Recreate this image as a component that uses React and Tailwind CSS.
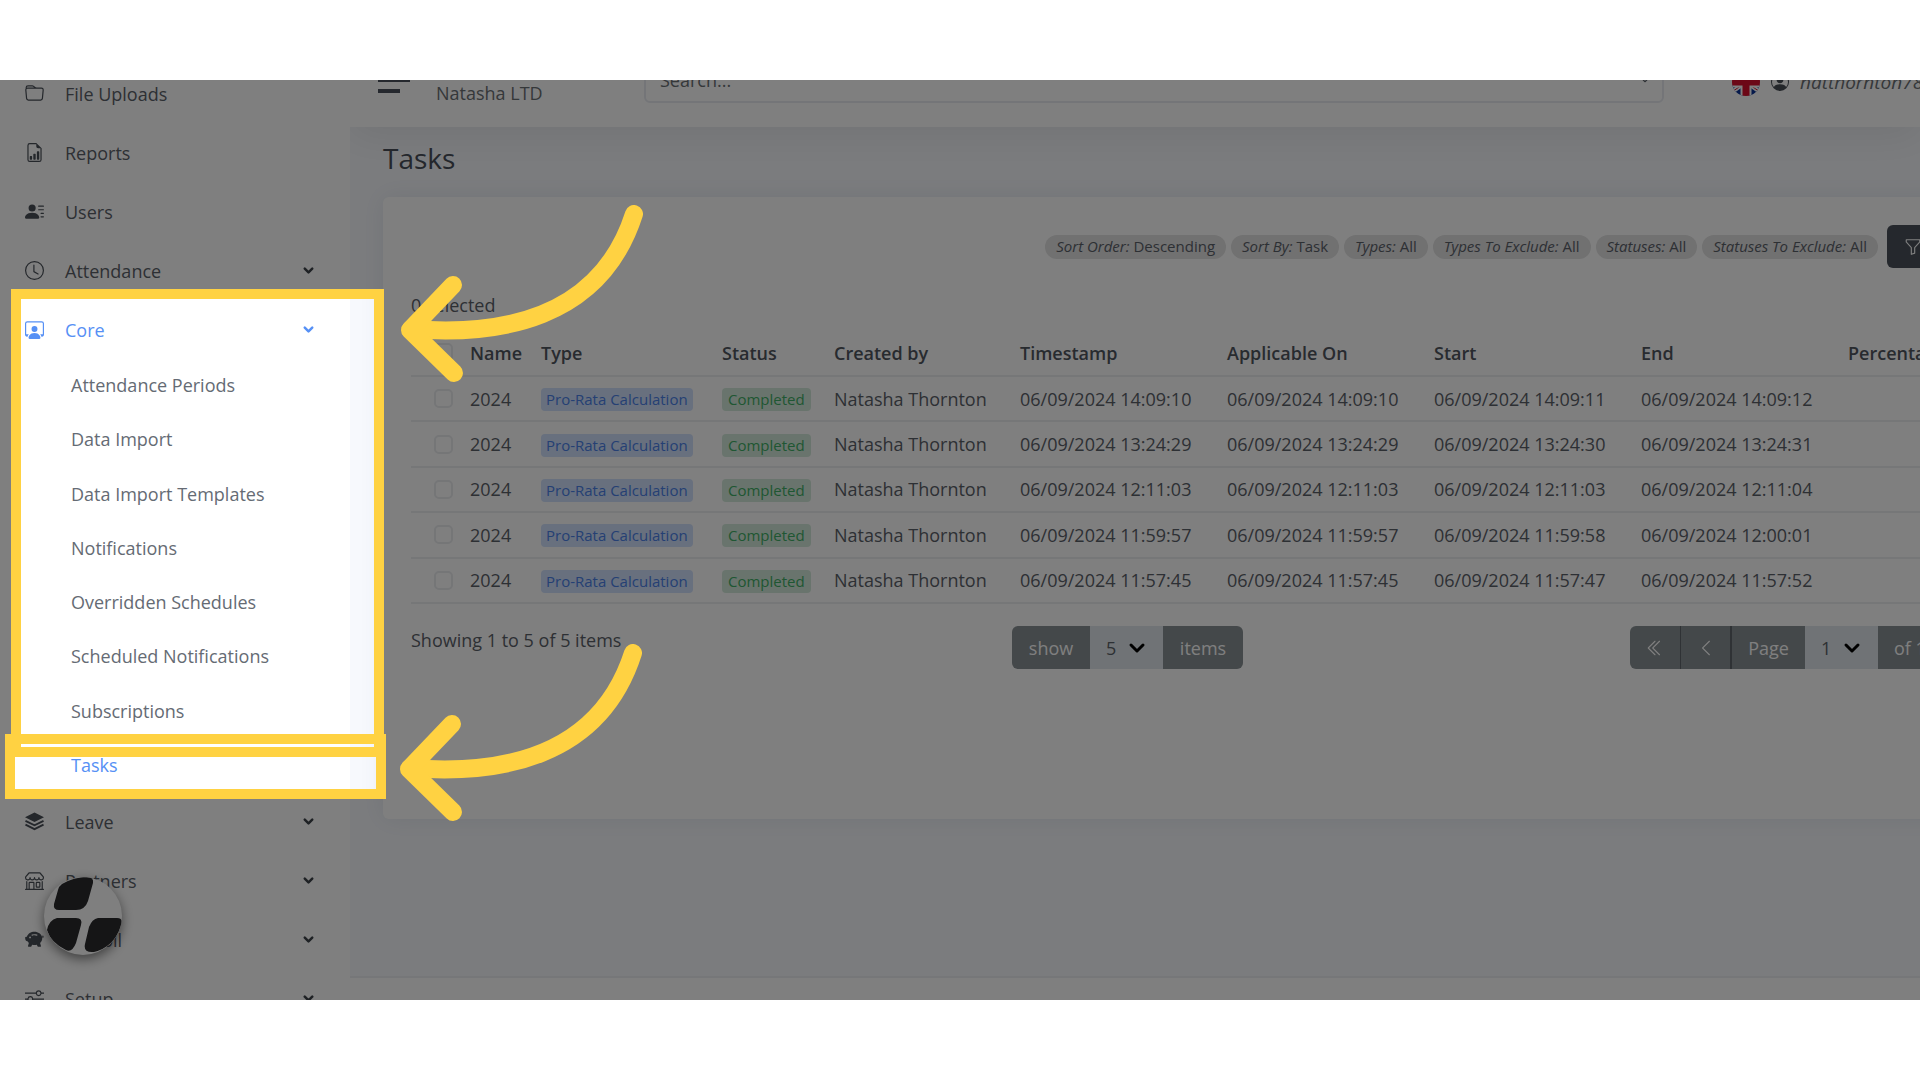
import React from 'react';
import { BsFolder, BsFileEarmarkBarGraph, BsPersonLinesFill, BsClock, BsPersonWorkspace, BsShop, BsPiggyBankFill, BsSliders, BsFunnel, BsPersonCircle, BsChevronLeft, BsChevronDoubleLeft } from 'react-icons/bs';
import { FiChevronDown } from 'react-icons/fi';

const LayersIcon = ({ size, className }) => (
  <svg viewBox="0 0 20 20" width={size} height={size} className={className} fill="none" stroke="currentColor" strokeWidth="2">
    <path d="M10 0.5L20 5.5L10 10.5L0 5.5Z" fill="currentColor" stroke="none" />
    <path d="M0.5 9.3L10 14L19.5 9.3M0.5 13.3L10 18L19.5 13.3" />
  </svg>
);

const topItems = [
  { label: 'File Uploads', icon: BsFolder },
  { label: 'Reports', icon: BsFileEarmarkBarGraph },
  { label: 'Users', icon: BsPersonLinesFill },
  { label: 'Attendance', icon: BsClock, expandable: true },
  { label: 'Core', icon: BsPersonWorkspace, expandable: true, active: true },
];

const coreItems = [
  'Attendance Periods',
  'Data Import',
  'Data Import Templates',
  'Notifications',
  'Overridden Schedules',
  'Scheduled Notifications',
  'Subscriptions',
  'Tasks',
];

const bottomItems = [
  { label: 'Leave', icon: LayersIcon, expandable: true },
  { label: 'Partners', icon: BsShop, expandable: true },
  { label: 'Payroll', icon: BsPiggyBankFill, expandable: true },
  { label: 'Setup', icon: BsSliders, expandable: true },
];

const filters = [
  ['Sort Order:', 'Descending'],
  ['Sort By:', 'Task'],
  ['Types:', 'All'],
  ['Types To Exclude:', 'All'],
  ['Statuses:', 'All'],
  ['Statuses To Exclude:', 'All'],
];

const columns = [
  { title: 'Name', width: 'w-[71px]' },
  { title: 'Type', width: 'w-[181px]' },
  { title: 'Status', width: 'w-[112px]' },
  { title: 'Created by', width: 'w-[186px]' },
  { title: 'Timestamp', width: 'w-[207px]' },
  { title: 'Applicable On', width: 'w-[207px]' },
  { title: 'Start', width: 'w-[207px]' },
  { title: 'End', width: 'w-[207px]' },
  { title: 'Percentage', width: 'w-[120px]' },
];

const tasks = [
  ['14:09:10', '14:09:10', '14:09:11', '14:09:12'],
  ['13:24:29', '13:24:29', '13:24:30', '13:24:31'],
  ['12:11:03', '12:11:03', '12:11:03', '12:11:04'],
  ['11:59:57', '11:59:57', '11:59:58', '12:00:01'],
  ['11:57:45', '11:57:45', '11:57:47', '11:57:52'],
];

const NavItem = ({ label, icon: Icon, expandable, active }) => (
  <li>
    <a href="#" className={`flex h-[59px] items-center pl-[25px] pr-[34px] ${active ? 'text-[#5690f5]' : 'text-[#5b6169]'}`}>
      <Icon size={19} className={active ? '' : 'text-[#484e56]'} />
      <span className="ml-[21px] flex-1">{label}</span>
      {expandable && <FiChevronDown size={15} strokeWidth={4} className={active ? '' : 'text-[#3c4249]'} />}
    </a>
  </li>
);

const Sidebar = () => (
  <nav className="relative z-10 -mt-4 w-[350px] shrink-0 bg-white">
    <ul>
      {topItems.map((item) => <NavItem key={item.label} {...item} />)}
    </ul>
    <ul className="-mt-px flex h-[434px] flex-col">
      {coreItems.map((label) => (
        <li key={label} className="flex-1">
          <a href="#" className={`flex h-full items-center pl-[71px] ${label === 'Tasks' ? 'text-[#5690f5]' : 'text-[#656b74]'}`}>
            {label}
          </a>
        </li>
      ))}
    </ul>
    <ul>
      {bottomItems.map((item) => <NavItem key={item.label} {...item} />)}
    </ul>
  </nav>
);

const Flag = () => (
  <svg viewBox="0 0 28 28" className="size-7">
    <clipPath id="flag"><circle cx="14" cy="14" r="14" /></clipPath>
    <g clipPath="url(#flag)">
      <rect width="28" height="28" fill="#0a3296" />
      <path d="M0 4L28 24M28 4L0 24" stroke="#fff" strokeWidth="4" />
      <path d="M0 4L28 24M28 4L0 24" stroke="#d8102f" strokeWidth="1" />
      <path d="M14 0V28M0 14H28" stroke="#fff" strokeWidth="11" />
      <path d="M14 0V28M0 14H28" stroke="#d8102f" strokeWidth="7" />
    </g>
  </svg>
);

const Header = () => (
  <header className="-mt-6 flex h-[71px] items-center bg-white shadow-[0_8px_40px_rgba(0,0,0,0.08)]">
    <button aria-label="Toggle menu" className="-mt-3 ml-7 flex w-8 shrink-0 flex-col gap-[7px]">
      <span className="h-1 w-8 bg-[#4a505c]" />
      <span className="h-1 w-[22px] bg-[#4a505c]" />
    </button>
    <span className="ml-[26px] w-[208px] shrink-0 pt-0.5 text-[#6b7075]">Natasha LTD</span>
    <div className="relative -mt-6 w-[1020px] shrink-0">
      <input aria-label="Search" placeholder="Search..." className="h-[46px] w-full rounded-md border-2 border-[#e8ebf0] px-3.5 placeholder:text-[#6b7075]" />
      <FiChevronDown size={14} className="absolute right-3 top-4" />
    </div>
    <div className="-mt-5 ml-[68px] flex items-center whitespace-nowrap">
      <Flag />
      <BsPersonCircle size={18} className="ml-[11px] text-[#484e56]" />
      <a href="#" className="ml-[11px] text-[19px] italic text-[#6b7075]">natthornton78</a>
    </div>
  </header>
);

const TasksTable = () => (
  <table className="h-[274px] table-fixed border-collapse text-left">
    <thead>
      <tr className="h-[46px] border-b-2 border-[#eceef1] text-[#50565f]">
        <th className="w-[51px] pl-[23px]">
          <input type="checkbox" aria-label="Select all" className="block size-[19px] appearance-none rounded-[5px] border-2 border-[#eaecef]" />
        </th>
        {columns.map((col) => <th key={col.title} className={`px-2 font-semibold ${col.width}`}>{col.title}</th>)}
      </tr>
    </thead>
    <tbody>
      {tasks.map((times) => (
        <tr key={times[3]} className="whitespace-nowrap border-b-2 border-[#eceef1]">
          <td className="pl-[23px]">
            <input type="checkbox" aria-label={`Select task ${times[0]}`} className="block size-[19px] appearance-none rounded-[5px] border-2 border-[#eaecef]" />
          </td>
          <td className="px-2">2024</td>
          <td className="px-2">
            <span className="inline-block rounded bg-[#d0e0fc] px-[5px] text-[15px] leading-[23px] text-[#4a80e8]">Pro-Rata Calculation</span>
          </td>
          <td className="px-2">
            <span className="inline-block rounded bg-[#d3e9da] px-1.5 text-[15px] leading-[23px] text-[#3fae66]">Completed</span>
          </td>
          <td className="px-2">Natasha Thornton</td>
          {times.map((time, i) => <td key={i} className="px-2">06/09/2024 {time}</td>)}
          <td />
        </tr>
      ))}
    </tbody>
  </table>
);

const PageSelect = ({ label, value }) => (
  <div className="relative w-[73px] bg-[#e1e7ec]">
    <select aria-label={label} defaultValue={value} className="h-full w-full appearance-none pl-4 text-[#5b6169]">
      <option>{value}</option>
    </select>
    <FiChevronDown size={24} className="pointer-events-none absolute right-3.5 top-2.5 stroke-[3] text-black" />
  </div>
);

const Pagination = () => (
  <div className="mt-[22px] flex">
    <p className="w-[601px] pt-0.5">Showing 1 to 5 of 5 items</p>
    <div className="flex h-[43px] w-[618px] text-white">
      <span className="flex w-[78px] items-center justify-center rounded-l-md bg-[#889094]">show</span>
      <PageSelect label="Items per page" value="5" />
      <span className="flex w-20 items-center justify-center rounded-r-md bg-[#889094]">items</span>
    </div>
    <div className="flex h-[43px] text-white">
      <button aria-label="First page" className="flex w-[51px] items-center justify-center rounded-l-md border-r border-[#5f656b] bg-[#889094]"><BsChevronDoubleLeft size={18} /></button>
      <button aria-label="Previous page" className="flex w-[51px] items-center justify-center border-r-2 border-[#5f656b] bg-[#889094]"><BsChevronLeft size={18} /></button>
      <span className="flex w-[73px] items-center justify-center bg-[#889094]">Page</span>
      <PageSelect label="Page" value="1" />
      <span className="flex w-[66px] items-center bg-[#889094] pl-4">of 1</span>
    </div>
  </div>
);

const Arrow = ({ className }) => (
  <svg viewBox="0 0 242 178" fill="none" stroke="#ffd242" strokeLinecap="round" strokeLinejoin="round" className={`absolute h-[178px] w-[242px] ${className}`}>
    <path d="M10 124C98 131 199 115 233 9" strokeWidth="18" />
    <path d="M52 80L9 125L53 168" strokeWidth="18" />
  </svg>
);

const App = () => (
  <div className="h-screen overflow-hidden bg-white py-20 font-['Open_Sans',sans-serif] text-[18px] leading-6 text-[#5b6169]">
    <div className="relative flex h-full overflow-hidden bg-[#f7f9fd]">
      <Sidebar />
      <div className="flex min-w-0 flex-1 flex-col overflow-hidden">
        <Header />
        <main className="w-max flex-1 pl-[33px]">
          <h1 className="mt-[13px] text-[28px] leading-9 text-[#484e58]">Tasks</h1>
          <section className="mt-[21px] min-h-[622px] rounded-md bg-white px-7 pt-7 shadow-[0_0_24px_rgba(60,80,120,0.10)]">
            <div className="flex items-center justify-end gap-[5px]">
              {filters.map(([name, value]) => (
                <span key={name} className="rounded-full bg-[#e2e2e2] px-[11px] pb-0.5 text-[15px] leading-[22px] text-[#5b6169]"><em>{name}</em> {value}</span>
              ))}
              <button aria-label="Filter" className="ml-1 flex h-[43px] w-[73px] items-center rounded-md bg-[#4a515b] pl-[17px] text-white"><BsFunnel size={18} /></button>
            </div>
            <p className="mb-[13px] mt-[25px]">0 selected</p>
            <TasksTable />
            <Pagination />
          </section>
        </main>
        <footer className="h-6 border-t-2 border-[#eceef3] bg-white" />
      </div>

      {/* Help widget */}
      <button aria-label="Help" className="absolute left-11 top-[797px] z-20 size-[78px] overflow-hidden rounded-full bg-white shadow-[0_4px_12px_rgba(0,0,0,0.5)]">
        <svg viewBox="0 0 78 78" className="size-full" fill="#2a2a2d">
          <path d="M18 7Q30 0 43 0Q50 0 49 6L44 24Q41 33 32 33H15Q9 33 10 27L14 13Q15 9 18 7Z" />
          <path d="M13 41H32Q39 41 37 48L32 66Q28 76 22 73Q6 65 3 53Q5 43 13 41Z" />
          <path d="M54 41H73Q80 41 77 49Q70 70 50 75Q39 76 41 67L45 50Q48 42 54 41Z" />
        </svg>
      </button>

      {/* Dimmed backdrop, open over the Core menu and the Tasks link */}
      <div className="absolute inset-0 z-30 bg-black/50 [clip-path:polygon(evenodd,0_0,100%_0,100%_100%,0_100%,0_0,11px_209px,384px_209px,384px_654px,386px_654px,386px_719px,5px_719px,5px_654px,11px_654px,11px_209px,0_0)]" />
      <div className="absolute left-[11px] top-[209px] z-30 h-[468px] w-[373px] border-10 border-[#ffd242]" />
      <div className="absolute left-[5px] top-[654px] z-30 h-[65px] w-[381px] border-10 border-[#ffd242]" />
      <Arrow className="left-[401px] top-[125px] z-30" />
      <Arrow className="left-[400px] top-[564px] z-30" />
    </div>
  </div>
);

export default App;
